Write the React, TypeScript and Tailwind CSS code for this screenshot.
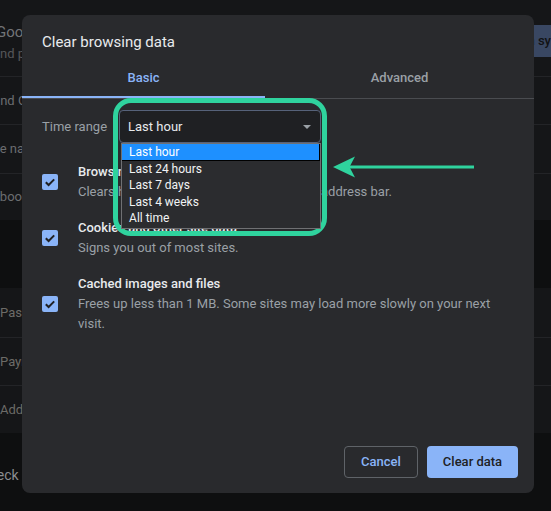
import React from "react";

const options = ["Last hour", "Last 24 hours", "Last 7 days", "Last 4 weeks", "All time"];

const items = [
  { title: "Browsing history", desc: "Clears history and autocompletions in the address bar." },
  { title: "Cookies and other site data", desc: "Signs you out of most sites." },
  {
    title: "Cached images and files",
    desc: "Frees up less than 1 MB. Some sites may load more slowly on your next visit.",
  },
];

function CheckBox() {
  return (
    <svg width="16" height="16" viewBox="0 0 16 16" className="shrink-0">
      <rect width="16" height="16" rx="2" fill="#8ab4f8" />
      <path d="M3.8 8.2l2.8 2.8 5.6-5.6" fill="none" stroke="#202124" strokeWidth="2" />
    </svg>
  );
}

export default function App() {
  return (
    <div className="relative h-[511px] w-[551px] overflow-hidden bg-[#0e0f10] font-[Roboto,sans-serif] text-[13px]">
      {/* settings page behind the dialog */}
      <div className="flex flex-col">
        <section className="bg-[#151618]">
          <div className="flex h-[76px] items-start justify-between">
            <div className="min-w-0 pt-[22px] leading-5">
              <p className="ml-[-4px] whitespace-nowrap text-[15px] text-[#727477]">Google smarts in Chrome</p>
              <p className="ml-[-7px] mt-[2px] whitespace-nowrap text-[#55575a]">and personalize Chrome</p>
            </div>
            <button className="mr-[-30px] mt-[25px] h-8 shrink-0 rounded bg-[#394762] px-4 font-medium text-[#111214]">
              Turn on sync
            </button>
          </div>
          <div className="flex h-12 items-center border-t border-[#232427]">
            <span className="ml-[-38px] whitespace-nowrap text-[#6b6d70]">Sync and Google services</span>
          </div>
          <div className="flex h-[49px] items-center border-t border-[#232427]">
            <span className="ml-[-39px] whitespace-nowrap text-[#6b6d70]">Chrome name and picture</span>
          </div>
          <div className="flex h-[47px] items-center border-t border-[#232427]">
            <span className="ml-[-42px] whitespace-nowrap text-[#6b6d70]">Import bookmarks and settings</span>
          </div>
        </section>

        <div className="h-[68px]" />

        <section className="bg-[#151618]">
          <div className="flex h-[49px] items-center">
            <span className="whitespace-nowrap text-[#6c6b67]">Passwords</span>
          </div>
          <div className="flex h-12 items-center border-t border-[#232427]">
            <span className="whitespace-nowrap text-[#6c6b67]">Payment methods</span>
          </div>
          <div className="flex h-12 items-center border-t border-[#232427]">
            <span className="whitespace-nowrap text-[#6c6b67]">Addresses and more</span>
          </div>
        </section>

        <div className="pt-[32px] leading-5">
          <span className="ml-[-61px] whitespace-nowrap text-[14px] text-[#8a8c8f]">Safety check</span>
        </div>
      </div>

      {/* dialog */}
      <div className="absolute left-[22px] top-[15px] flex h-[478px] w-[512px] flex-col rounded-lg bg-[#292a2d]">
        <h2 className="px-5 pt-[17px] text-[15px] leading-5 text-[#e8eaed]">Clear browsing data</h2>

        <div className="mt-[6px] flex">
          <div className="flex h-10 w-[243px] items-center justify-center border-b-2 border-[#8ab4f8] pt-px font-medium text-[#8ab4f8]">
            Basic
          </div>
          <div className="flex h-10 flex-1 items-center justify-center border-b-2 border-transparent pt-px font-medium text-[#9aa0a6]">
            Advanced
          </div>
        </div>
        <div className="h-px bg-[#4a4c50]" />

        <div className="mt-[11px] flex items-center gap-3 px-5">
          <span className="text-[#9aa0a6]">Time range</span>
          <div className="relative flex h-[33px] w-[202px] items-center justify-between rounded-[4px] border border-[#56627a] bg-[#1f2023] pl-2 pr-[9px] text-[#e8eaed]">
            <span>Last hour</span>
            <svg width="8" height="4" viewBox="0 0 8 4">
              <path d="M0 0h8L4 4z" fill="#9aa0a6" />
            </svg>

            <ul className="absolute left-px top-[32px] z-10 w-[200px] border border-[#6f7073] bg-[#2b2c2f] pb-px">
              {options.map((o, i) => (
                <li
                  key={o}
                  className={
                    i === 0
                      ? "h-[16.5px] border-b border-r border-black bg-[#1e90ff] pl-[7px] text-[12px] leading-[16.5px] text-white"
                      : "h-[16.5px] pl-[7px] text-[12px] leading-[16.5px] text-[#f1f3f4]"
                  }
                >
                  {o}
                </li>
              ))}
            </ul>
          </div>
        </div>

        <div className="mt-[19px] flex flex-col gap-4 px-5">
          {items.map((it) => (
            <div key={it.title} className="flex items-center gap-5">
              <CheckBox />
              <div className="leading-5">
                <p className="font-medium text-[#e8eaed]">{it.title}</p>
                <p className="text-[#9aa0a6]">{it.desc}</p>
              </div>
            </div>
          ))}
        </div>

        <div className="mt-auto flex justify-end gap-[9px] pb-[15px] pr-4">
          <button className="h-8 w-[74px] rounded border border-[#5f6368] font-medium text-[#8ab4f8]">Cancel</button>
          <button className="h-8 w-[91px] rounded bg-[#8ab4f8] font-medium text-[#202124]">Clear data</button>
        </div>
      </div>

      {/* green annotation */}
      <div className="absolute left-[113px] top-[98px] h-[138px] w-[214px] rounded-[18px] border-[5px] border-[#2fd39e]" />
      <svg className="absolute left-[330px] top-[150px]" width="150" height="34" viewBox="0 0 150 34">
        <path d="M18 17H144" stroke="#2fd39e" strokeWidth="3.2" />
        <path d="M3 17L25 6.5 19.5 17 25 27.5z" fill="#2fd39e" />
      </svg>
    </div>
  );
}
